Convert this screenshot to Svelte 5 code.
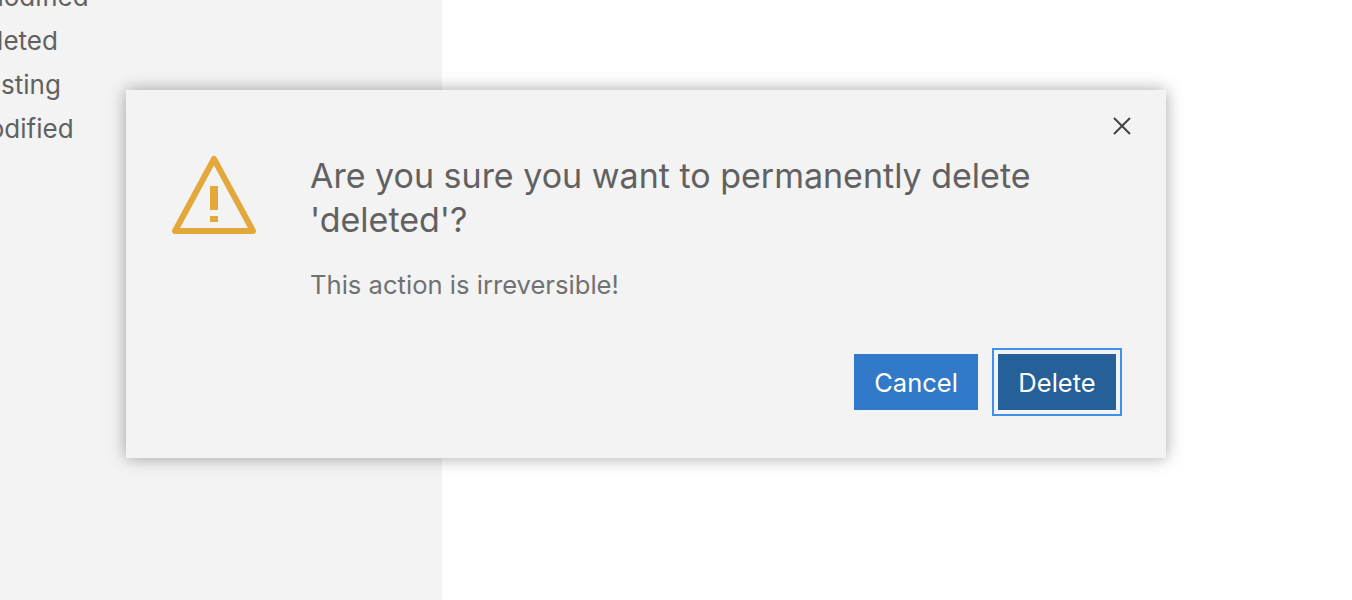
<script>
  const files = [
    { name: 'modified', nested: true },
    { name: 'deleted', nested: false },
    { name: 'existing', nested: false },
    { name: 'modified', nested: false }
  ];
</script>

<div class="workbench">
  <aside>
    <ul>
      {#each files as file}
        <li class:nested={file.nested}>{file.name}</li>
      {/each}
    </ul>
  </aside>
  <main></main>

  <div class="dialog" role="dialog">
    <div class="toolbar">
      <button class="close" aria-label="Close" type="button">
        <svg xmlns="http://www.w3.org/2000/svg" width="20" height="20" viewBox="0 0 20 20">
          <path d="M2 2l16 16M18 2L2 18" fill="none" stroke="#424242" stroke-width="2" />
        </svg>
      </button>
    </div>

    <div class="message">
      <svg class="warning" xmlns="http://www.w3.org/2000/svg" width="84" height="80" viewBox="0 0 84 80">
        <path d="M42 4L3 76h78z" fill="none" stroke="#e2a83a" stroke-width="6" stroke-linejoin="round" />
        <path d="M38 31h8v24h-8zM38 61h8v6h-8z" fill="#e2a83a" />
      </svg>
      <div class="copy">
        <h2>Are you sure you want to permanently delete 'deleted'?</h2>
        <p>This action is irreversible!</p>
      </div>
    </div>

    <footer>
      <button class="primary cancel" type="button">Cancel</button>
      <button class="primary focused" type="button">Delete</button>
    </footer>
  </div>
</div>

<style>
  :global(body) {
    background: #ffffff;
    font-family: Inter, 'Noto Sans', sans-serif;
    margin: 0;
    overflow: hidden;
  }

  aside {
    background: #f3f3f3;
    flex: 0 0 442px;
    overflow: hidden;
  }

  button {
    appearance: none;
    border: none;
    font-family: inherit;
    margin: 0;
    padding: 0;
  }

  footer {
    display: flex;
    gap: 20px;
    justify-content: flex-end;
    margin-top: 51px;
    padding-right: 50px;
  }

  h2 {
    color: #616161;
    font-size: 34px;
    font-weight: 400;
    line-height: 44px;
    margin: 0;
  }

  li {
    color: #616161;
    font-size: 26px;
    height: 44px;
    line-height: 44px;
  }

  li.nested {
    padding-left: 15px;
  }

  main {
    flex: 1;
  }

  p {
    color: #717171;
    font-size: 25.6px;
    line-height: 36px;
    margin: 25px 0 0 0;
  }

  ul {
    list-style: none;
    margin: -25px 0 0 -34px;
    padding: 0;
  }

  .cancel {
    background: #327ac9;
    width: 124px;
  }

  .close {
    align-items: center;
    background: none;
    display: flex;
    height: 20px;
    justify-content: center;
    width: 20px;
  }

  .copy {
    margin-top: 4px;
    width: 780px;
  }

  .dialog {
    background: #f3f3f3;
    box-shadow: 0 0 16px #00000059;
    box-sizing: border-box;
    height: 368px;
    left: 126px;
    position: absolute;
    top: 90px;
    width: 1040px;
  }

  .focused {
    background: #266099;
    outline: 2px solid #3e90e8;
    outline-offset: 4px;
    width: 118px;
  }

  .message {
    align-items: flex-start;
    display: flex;
    gap: 54px;
    margin-top: 14px;
    padding-left: 46px;
  }

  .primary {
    color: #ffffff;
    font-size: 25.5px;
    height: 56px;
  }

  .toolbar {
    display: flex;
    justify-content: flex-end;
    padding: 26px 34px 0 0;
  }

  .warning {
    flex: none;
    margin-top: 5px;
  }

  .workbench {
    display: flex;
    height: 600px;
    position: relative;
  }
</style>
